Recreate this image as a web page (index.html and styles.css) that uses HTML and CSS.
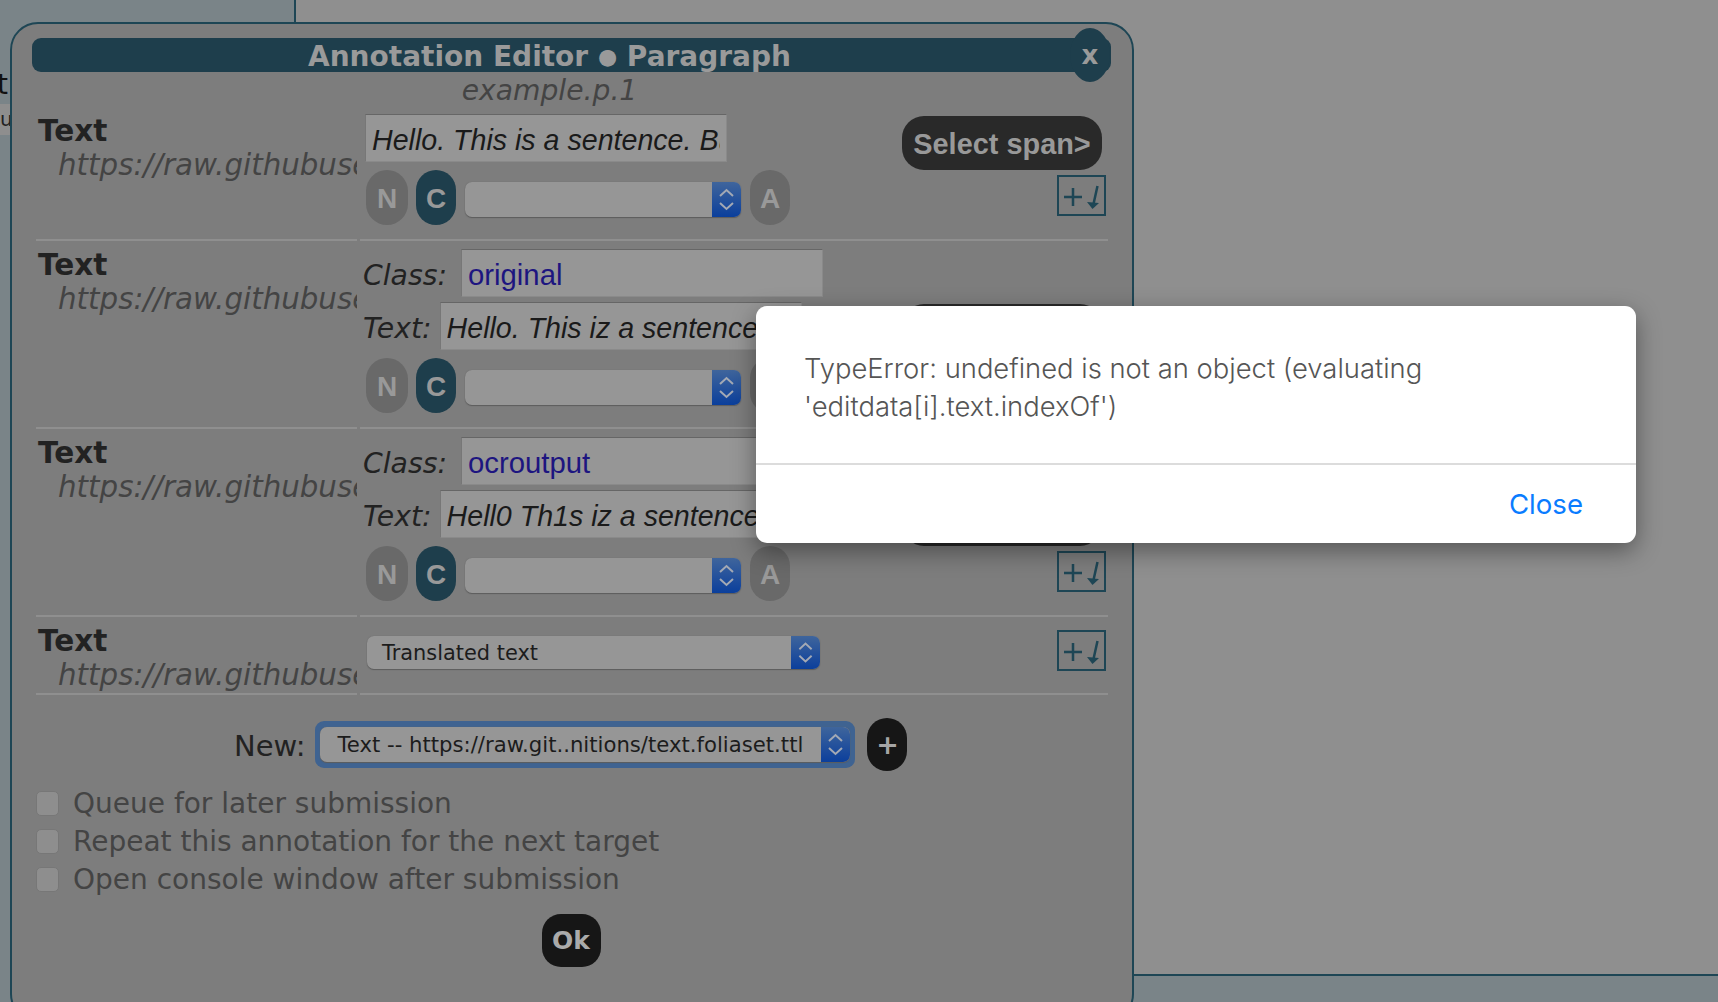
FILE: index.html
```html
<!DOCTYPE html>
<html lang="en">
<head>
<meta charset="utf-8">
<title>Annotation Editor</title>
<link rel="stylesheet" href="styles.css">
</head>
<body>
<svg class="defs" width="0" height="0" aria-hidden="true">
  <symbol id="updown" viewBox="0 0 29 35"><path d="M8 14 14.500 8 21 14M8 21 14.500 27 21 21" fill="none" stroke="#a3a9b4" stroke-width="2"/></symbol>
  <symbol id="addbelow" viewBox="0 0 45 37"><path d="M5 20H23M14 11V29M38.500 9 34.500 27" fill="none" stroke="#1e4655" stroke-width="2.500"/><path d="M28 25 40 26 33.500 32Z" fill="#1e4655"/></symbol>
</svg>
<div class="backwindow"></div>
<span class="behind-letter">t</span>
<span class="behind-input">u</span>

<section class="editor">
  <h1 class="editor-title">Annotation Editor <span class="dot">●</span> Paragraph</h1>
  <button class="close-x">x</button>
  <div class="target-id">example.p.1</div>

  <div class="row">
    <div class="info"><strong>Text</strong><em>https://raw.githubusercontent.com/proycon/folia/master/setdefinitions/text.foliaset.ttl</em></div>
    <div class="fields">
      <div class="main">
        <div class="field first"><span class="input text-input"><span class="clip">Hello. This is a sentence. But this is another</span></span></div>
        <div class="controls">
          <span class="pill">N</span><span class="pill active">C</span>
          <div class="select small"><span></span><svg class="arrow"><use href="#updown"/></svg></div>
          <span class="pill last">A</span>
        </div>
      </div>
      <div class="side">
        <button class="span-btn">Select span&gt;</button>
        <span class="addbox"><svg><use href="#addbelow"/></svg></span>
      </div>
    </div>
  </div>

  <div class="row tall">
    <div class="info"><strong>Text</strong><em>https://raw.githubusercontent.com/proycon/folia/master/setdefinitions/text.foliaset.ttl</em></div>
    <div class="fields">
      <div class="main">
        <div class="field"><label>Class:</label><span class="input class-input"><span class="clip">original</span></span></div>
        <div class="field"><label>Text:</label><span class="input text-input"><span class="clip">Hello. This iz a sentence. But this is another</span></span></div>
        <div class="controls">
          <span class="pill">N</span><span class="pill active">C</span>
          <div class="select small"><span></span><svg class="arrow"><use href="#updown"/></svg></div>
          <span class="pill last">A</span>
        </div>
      </div>
      <div class="side">
        <button class="span-btn">Select span&gt;</button>
        <span class="addbox"><svg><use href="#addbelow"/></svg></span>
      </div>
    </div>
  </div>

  <div class="row tall">
    <div class="info"><strong>Text</strong><em>https://raw.githubusercontent.com/proycon/folia/master/setdefinitions/text.foliaset.ttl</em></div>
    <div class="fields">
      <div class="main">
        <div class="field"><label>Class:</label><span class="input class-input"><span class="clip">ocroutput</span></span></div>
        <div class="field"><label>Text:</label><span class="input text-input"><span class="clip">Hell0 Th1s iz a sentence. But this is another</span></span></div>
        <div class="controls">
          <span class="pill">N</span><span class="pill active">C</span>
          <div class="select small"><span></span><svg class="arrow"><use href="#updown"/></svg></div>
          <span class="pill last">A</span>
        </div>
      </div>
      <div class="side">
        <button class="span-btn">Select span&gt;</button>
        <span class="addbox"><svg><use href="#addbelow"/></svg></span>
      </div>
    </div>
  </div>

  <div class="row short">
    <div class="info"><strong>Text</strong><em>https://raw.githubusercontent.com/proycon/folia/master/setdefinitions/text.foliaset.ttl</em></div>
    <div class="fields">
      <div class="main">
        <div class="select wide"><span>Translated text</span><svg class="arrow"><use href="#updown"/></svg></div>
      </div>
      <div class="side">
        <span class="addbox"><svg><use href="#addbelow"/></svg></span>
      </div>
    </div>
  </div>

  <div class="new-row">
    <span class="new-label">New:</span>
    <div class="focus-ring"><div class="select new"><span>Text -- https://raw.git..nitions/text.foliaset.ttl</span><svg class="arrow"><use href="#updown"/></svg></div></div>
    <button class="add-btn">+</button>
  </div>

  <ul class="options">
    <li><span class="check"></span>Queue for later submission</li>
    <li><span class="check"></span>Repeat this annotation for the next target</li>
    <li><span class="check"></span>Open console window after submission</li>
  </ul>

  <div class="submit"><button class="ok-btn">Ok</button></div>
</section>

<div class="modal" role="dialog">
  <div class="modal-body">TypeError: undefined is not an object (evaluating 'editdata[i].text.indexOf')</div>
  <div class="modal-footer"><button class="close-link">Close</button></div>
</div>
</body>
</html>
```
FILE: styles.css
```css
* { box-sizing: border-box; }
html, body { margin: 0; height: 100%; }
body {
  background: #7a8488;
  overflow: hidden;
  position: relative;
  font-family: "DejaVu Sans", Verdana, sans-serif;
}
.defs { position: absolute; }
button { font: inherit; border: 0; padding: 0; }

.backwindow {
  margin-left: 294px;
  height: 976px;
  background: #8f8f8f;
  border-left: 2px solid #1e4655;
  border-bottom: 2px solid #1e4655;
}
.behind-letter {
  position: absolute;
  left: -3px;
  top: 68px;
  font-size: 28px;
  line-height: 34px;
  color: #111;
}
.behind-input {
  position: absolute;
  left: 0;
  top: 104px;
  width: 12px;
  height: 31px;
  background: #8e8e8e;
  font-size: 20px;
  line-height: 31px;
  color: #222;
}

.editor {
  position: absolute;
  left: 10px;
  top: 22px;
  width: 1124px;
  height: 1000px;
  padding: 14px 25px 0 24px;
  background: #7d7d7d;
  border: 2px solid #1e4655;
  border-radius: 28px;
}
.editor-title {
  margin: 0 -4px 0 -4px;
  height: 34px;
  padding-right: 44px;
  background: #1e3e4c;
  border-radius: 9px;
  color: #9a9a9a;
  font-size: 28px;
  font-weight: 700;
  line-height: 38px;
  text-align: center;
  white-space: nowrap;
}
.dot { font-size: 22px; vertical-align: 2px; }
.close-x {
  position: absolute;
  left: 1058px;
  top: 4px;
  width: 40px;
  height: 54px;
  border-radius: 50%;
  background: #1e3e4c;
  color: #9a9a9a;
  font-family: "DejaVu Sans", sans-serif;
  font-size: 26px;
  font-weight: 700;
  line-height: 52px;
}
.target-id {
  height: 33px;
  padding-right: 44px;
  color: #444;
  font-size: 28.200px;
  font-style: italic;
  line-height: 38px;
  text-align: center;
}

.row {
  display: grid;
  grid-template-columns: 321px 748px;
  column-gap: 3px;
  height: 136px;
}
.row.tall { height: 188px; }
.row.short { height: 78px; }
.info, .fields { border-bottom: 2px solid #8f8f8f; }
.info {
  min-width: 0;
  padding: 8px 0 0 2px;
  overflow: hidden;
  white-space: nowrap;
}
.tall .info, .short .info { padding-top: 6px; }
.info strong {
  display: block;
  color: #222;
  font-size: 29.500px;
  line-height: 36px;
}
.info em {
  display: block;
  margin-left: 20px;
  color: #444;
  font-size: 29.300px;
  line-height: 33px;
}
.fields {
  display: flex;
  justify-content: space-between;
  padding: 9px 2px 0 3px;
}
.tall .fields { padding-top: 8px; }
.main { min-width: 0; }
.field {
  display: flex;
  align-items: center;
  margin-bottom: 5px;
}
.field.first { margin-left: 2px; }
.field label {
  margin-right: 8px;
  padding-top: 4px;
  color: #222;
  font-size: 28.300px;
  font-style: italic;
}
.field label + .class-input { margin-left: 6px; }
.input {
  display: block;
  height: 48px;
  width: 362px;
  padding: 0 6px;
  background: #969696;
  border: 1px solid #8a8a8a;
  border-top-color: #666;
  border-left-color: #777;
  font-family: "Liberation Sans", Arial, sans-serif;
  line-height: 50px;
  white-space: nowrap;
}
.clip { display: block; height: 46px; overflow: hidden; }
.text-input { color: #1a1a1a; font-size: 28.600px; font-style: italic; }
.class-input { color: #1d1580; font-size: 29.300px; }

.controls {
  display: flex;
  align-items: center;
  height: 55px;
  margin: 8px 0 0 3px;
}
.pill {
  width: 42px;
  height: 55px;
  margin-right: 8px;
  border-radius: 21px;
  background: #696969;
  color: #999;
  font-family: "Liberation Sans", Arial, sans-serif;
  font-size: 28px;
  font-weight: 700;
  line-height: 57px;
  text-align: center;
}
.pill.active { width: 40px; background: #1e3e4c; margin-right: 9px; }
.pill.last { width: 40px; margin-right: 0; }
.select {
  display: flex;
  justify-content: space-between;
  align-items: stretch;
  background: #969696;
  border-radius: 7px;
  box-shadow: 0 1px 1px #5c5c5c, 0 0 1px #666;
  color: #1c1c1c;
  font-size: 20.900px;
  white-space: nowrap;
}
.select span { padding-left: 15px; line-height: 35px; }
.arrow {
  display: block;
  flex: none;
  width: 29px;
  background: linear-gradient(#3f659c, #0b3f9c);
  border-radius: 0 7px 7px 0;
}
.select.small { width: 276px; height: 35px; margin: 4px 9px 0 0; }
.select.wide { width: 453px; height: 33px; margin: 10px 0 0 4px; }
.focus-ring {
  padding: 6px 5px;
  background: #3f6391;
  border-radius: 9px;
}
.select.new { width: 530px; height: 35px; font-size: 21.200px; }
.select.new span { padding-left: 17px; line-height: 35px; }

.side {
  display: flex;
  flex-direction: column;
  align-items: flex-end;
  align-self: flex-end;
  width: 204px;
  margin-bottom: 23px;
}
.short .side { margin-bottom: 22px; }
.span-btn {
  align-self: flex-start;
  width: 200px;
  height: 54px;
  margin-bottom: 5px;
  padding-top: 2px;
  background: #292929;
  border-radius: 22px;
  color: #999;
  font-family: "Liberation Sans", Arial, sans-serif;
  font-size: 28.900px;
  font-weight: 700;
  white-space: nowrap;
}
.addbox {
  display: block;
  width: 49px;
  height: 41px;
  border: 2px solid #1e4655;
}
.addbox svg { display: block; width: 45px; height: 37px; }

.new-row {
  display: flex;
  align-items: center;
  height: 53px;
  margin-top: 23px;
  padding-left: 198px;
}
.new-label {
  margin-right: 10px;
  padding-top: 2px;
  color: #222;
  font-size: 29px;
}
.add-btn {
  width: 40px;
  height: 53px;
  margin-left: 12px;
  border-radius: 20px;
  background: #161616;
  color: #a5a5a5;
  font-family: "DejaVu Sans", sans-serif;
  font-size: 27px;
  font-weight: 700;
}
.options { list-style: none; margin: 13px 0 0 0; padding: 0; }
.options li {
  display: flex;
  align-items: center;
  height: 38.200px;
  color: #444;
  font-size: 28px;
}
.check {
  width: 23px;
  height: 25px;
  margin-right: 14px;
  background: #8e8e8e;
  border: 1px solid #777;
  border-radius: 5px;
}
.submit { display: flex; justify-content: center; margin: 15px 0 0 -1px; }
.ok-btn {
  width: 59px;
  height: 53px;
  background: #161616;
  border-radius: 19px;
  color: #aaa;
  font-family: "DejaVu Sans", sans-serif;
  font-size: 25px;
  font-weight: 700;
}

.modal {
  position: absolute;
  left: 756px;
  top: 306px;
  width: 880px;
  height: 237px;
  background: #fff;
  border-radius: 11px;
  box-shadow: 0 8px 24px rgba(0, 0, 0, .4);
  font-family: Inter, sans-serif;
}
.modal-body {
  height: 159px;
  padding: 43px 48px 0;
  border-bottom: 2px solid #dcdcdc;
  color: #555;
  font-size: 27.400px;
  font-weight: 300;
  line-height: 38px;
}
.modal-footer {
  display: flex;
  justify-content: flex-end;
  padding: 21px 53px 0 0;
}
.close-link {
  background: none;
  color: #0a7cff;
  font-family: Inter, sans-serif;
  font-size: 27.600px;
  line-height: 36px;
}
```
